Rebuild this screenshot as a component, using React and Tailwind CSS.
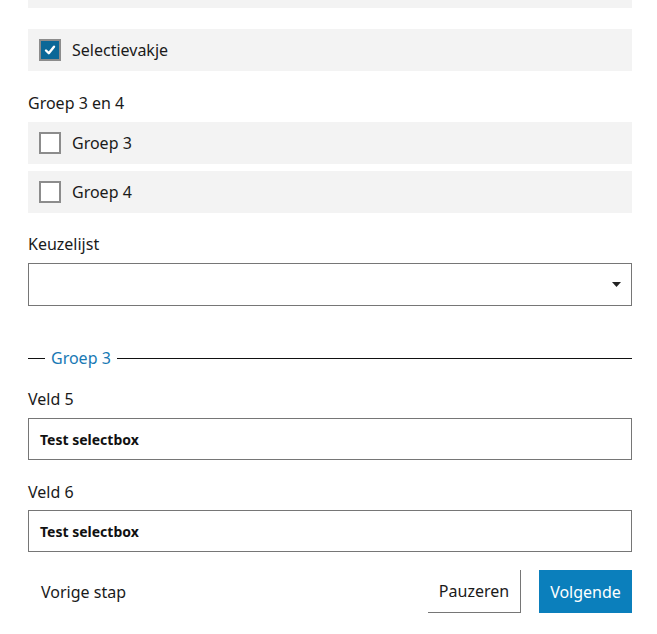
import React from "react";

function Check({ checked }) {
  return (
    <span
      className={
        "flex h-[22px] w-[22px] shrink-0 items-center justify-center border-2 border-[#8c8c8c] " +
        (checked ? "bg-[#0b6797]" : "bg-white")
      }
    >
      {checked && (
        <svg width="12" height="12" viewBox="0 0 12 12">
          <path d="M2 6.5 L4.8 9.2 L10 2.8" fill="none" stroke="white" strokeWidth="2.4" strokeLinecap="round" strokeLinejoin="round" />
        </svg>
      )}
    </span>
  );
}

function CheckRow({ label, checked }) {
  return (
    <label className="flex h-[42px] items-center gap-[11px] bg-[#f3f3f3] pl-[11px]">
      <Check checked={checked} />
      <span className="text-[16px] leading-6 text-[#1a1a1a]">{label}</span>
    </label>
  );
}

export default function App() {
  return (
    <div className="min-h-[634px] bg-white" style={{ fontFamily: '"Noto Sans", "Open Sans", sans-serif' }}>
      <div className="ml-[28px] w-[604px] flex flex-col">
        <div className="h-[8px] bg-[#f3f3f3]" />
        <div className="mt-[21px]">
          <CheckRow label="Selectievakje" checked />
        </div>
        <div className="mt-[20px] h-6 text-[16px] leading-6 text-[#1a1a1a]">Groep 3 en 4</div>
        <div className="mt-[7px] flex flex-col gap-[7px]">
          <CheckRow label="Groep 3" />
          <CheckRow label="Groep 4" />
        </div>
        <div className="mt-[19px] h-6 text-[16px] leading-6 text-[#1a1a1a]">Keuzelijst</div>
        <div className="mt-[7px] flex h-[43px] items-center justify-end border border-[#767676] pr-[10px]">
          <svg width="9" height="5" viewBox="0 0 9 5">
            <path d="M0 0 H9 L4.5 5 Z" fill="#222" />
          </svg>
        </div>
        <div className="mt-[40px] flex h-6 items-center">
          <div className="h-px w-[17px] bg-[#111]" />
          <span className="px-[6px] text-[16px] leading-6 text-[#1779b4]">Groep 3</span>
          <div className="h-px flex-1 bg-[#111]" />
        </div>
        <div className="mt-[17px] h-6 text-[16px] leading-6 text-[#1a1a1a]">Veld 5</div>
        <div className="mt-[7px] flex h-[42px] items-center border border-[#767676] pl-[11px]">
          <span className="text-[14px] font-bold text-[#111]">Test selectbox</span>
        </div>
        <div className="mt-[20px] h-6 text-[16px] leading-6 text-[#1a1a1a]">Veld 6</div>
        <div className="mt-[6px] flex h-[42px] items-center border border-[#767676] pl-[11px]">
          <span className="text-[14px] font-bold text-[#111]">Test selectbox</span>
        </div>
        <div className="mt-[18px] flex h-[43px] items-stretch">
          <button className="px-[13px] text-[16px] text-[#1a1a1a]">Vorige stap</button>
          <div className="flex-1" />
          <button className="w-[93px] border-r border-b border-[#767676] text-[16px] text-[#1a1a1a]">Pauzeren</button>
          <button className="ml-[18px] w-[93px] bg-[#0b7fbc] text-[16px] text-white">Volgende</button>
        </div>
      </div>
    </div>
  );
}
